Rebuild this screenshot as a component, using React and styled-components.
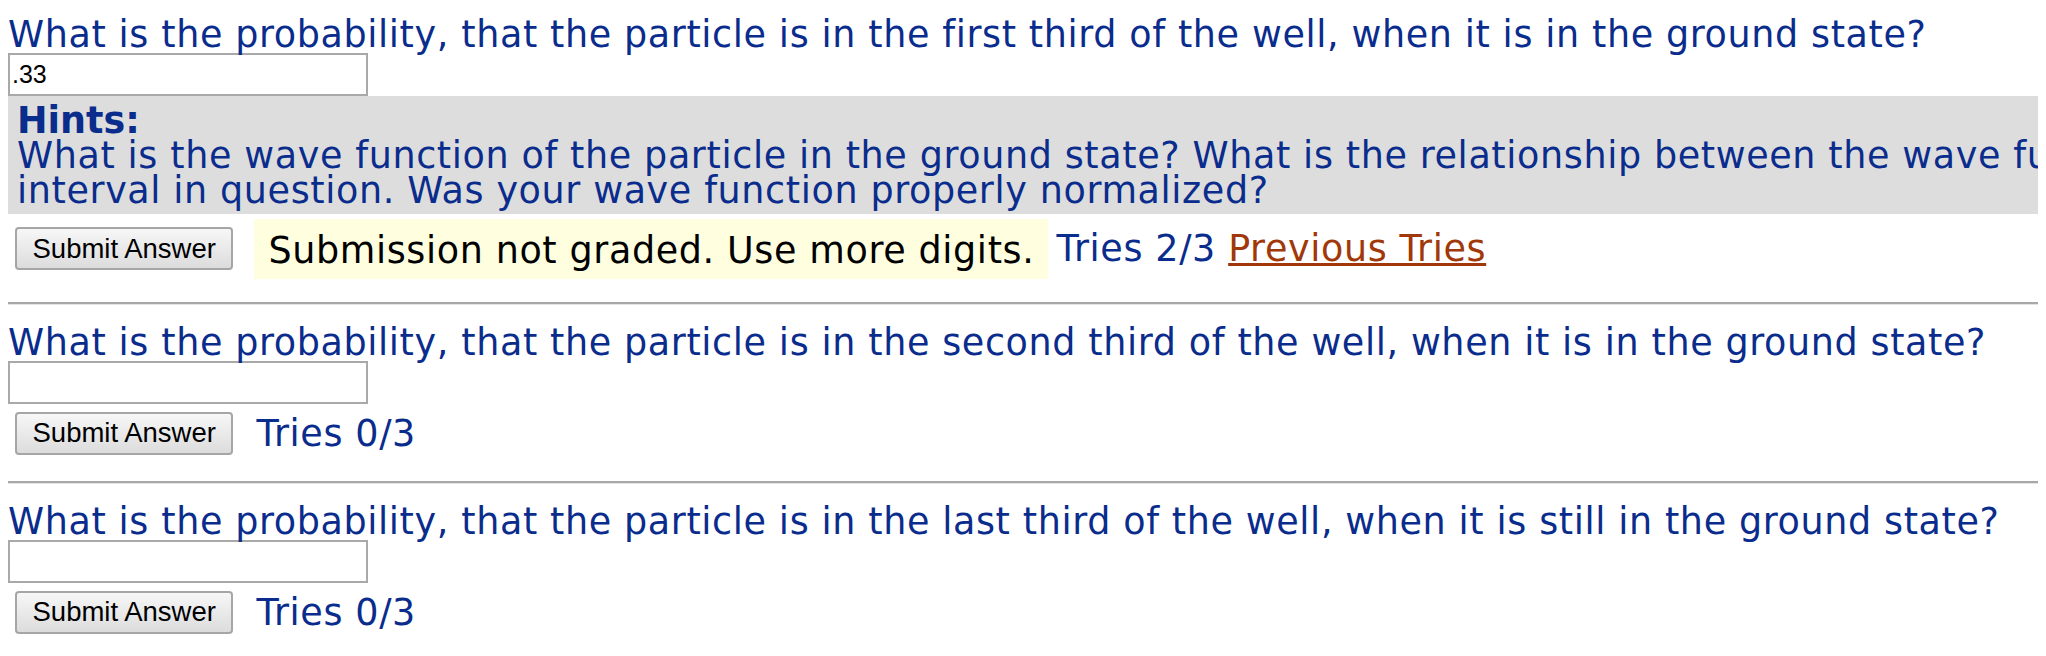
import React from "react";
import styled, { createGlobalStyle } from "styled-components";

const Global = createGlobalStyle`
  html, body { overflow: hidden; background: #ffffff; }
  body { margin: 8px; }
`;

const Page = styled.div`
  width: 2800px;
  padding-top: 8.5px;
  font-family: "DejaVu Sans", Verdana, sans-serif;
  font-size: 36.5px;
  letter-spacing: 0.62px;
  color: #0a2c8c;
`;

const Question = styled.div`
  line-height: 36px;
  white-space: nowrap;
`;

const AnswerInput = styled.input`
  display: block;
  box-sizing: border-box;
  width: 360px;
  height: 43px;
  margin: 0;
  padding: 0 2px;
  border: 2px solid #a9a9a9;
  background: #ffffff;
  color: #000000;
  font-family: "Liberation Sans", Arial, sans-serif;
  font-size: 25px;
  letter-spacing: normal;
  outline: none;
`;

const Hints = styled.div`
  background: #dddddd;
  padding: 7px 9px 6px;
  line-height: 35px;
  white-space: nowrap;
`;

const HintTitle = styled.div`
  font-weight: bold;
  letter-spacing: 0;
`;

const Row = styled.div`
  display: flex;
  align-items: center;
  margin-top: 5px;
`;

const SubmitButton = styled.button`
  box-sizing: border-box;
  height: 43px;
  margin: 3px 0 3px 7px;
  padding: 0 15.5px;
  border: 2px solid #a6a6a6;
  border-radius: 4px;
  background: linear-gradient(#f7f7f7, #dcdcdc);
  color: #000000;
  font-family: "Liberation Sans", Arial, sans-serif;
  font-size: 27.5px;
  letter-spacing: normal;
  white-space: nowrap;
`;

const Feedback = styled.span`
  box-sizing: border-box;
  height: 60px;
  margin-left: 21px;
  padding: 3px 14px 0;
  background: #ffffe0;
  color: #000000;
  line-height: 57px;
  white-space: nowrap;
`;

const Tries = styled.span`
  margin-left: ${(p) => (p.$afterFeedback ? "8px" : "23px")};
  line-height: 35px;
  white-space: nowrap;
`;

const PrevLink = styled.a`
  color: #a0380a;
  text-decoration: underline;
  cursor: pointer;
`;

const Separator = styled.hr`
  height: 0;
  margin: 23px 0 20px;
  border: 0;
  border-top: 2px solid #a8a8a8;
  border-bottom: 1px solid #e4e4e4;
`;

export default function App() {
  return (
    <>
      <Global />
      <Page>
        <Question>
          What is the probability, that the particle is in the first third of the well, when it is in the ground state?
        </Question>
        <AnswerInput type="text" defaultValue=".33" />
        <Hints>
          <HintTitle>Hints:</HintTitle>
          What is the wave function of the particle in the ground state? What is the relationship between the wave function and the probability density? Integrate the probability density over the
          <br />
          interval in question. Was your wave function properly normalized?
        </Hints>
        <Row>
          <SubmitButton type="button">Submit Answer</SubmitButton>
          <Feedback>Submission not graded. Use more digits.</Feedback>
          <Tries $afterFeedback>
            Tries 2/3 <PrevLink>Previous Tries</PrevLink>
          </Tries>
        </Row>

        <Separator />

        <Question>
          What is the probability, that the particle is in the second third of the well, when it is in the ground state?
        </Question>
        <AnswerInput type="text" defaultValue="" />
        <Row>
          <SubmitButton type="button">Submit Answer</SubmitButton>
          <Tries>Tries 0/3</Tries>
        </Row>

        <Separator />

        <Question>
          What is the probability, that the particle is in the last third of the well, when it is still in the ground state?
        </Question>
        <AnswerInput type="text" defaultValue="" />
        <Row>
          <SubmitButton type="button">Submit Answer</SubmitButton>
          <Tries>Tries 0/3</Tries>
        </Row>
      </Page>
    </>
  );
}
